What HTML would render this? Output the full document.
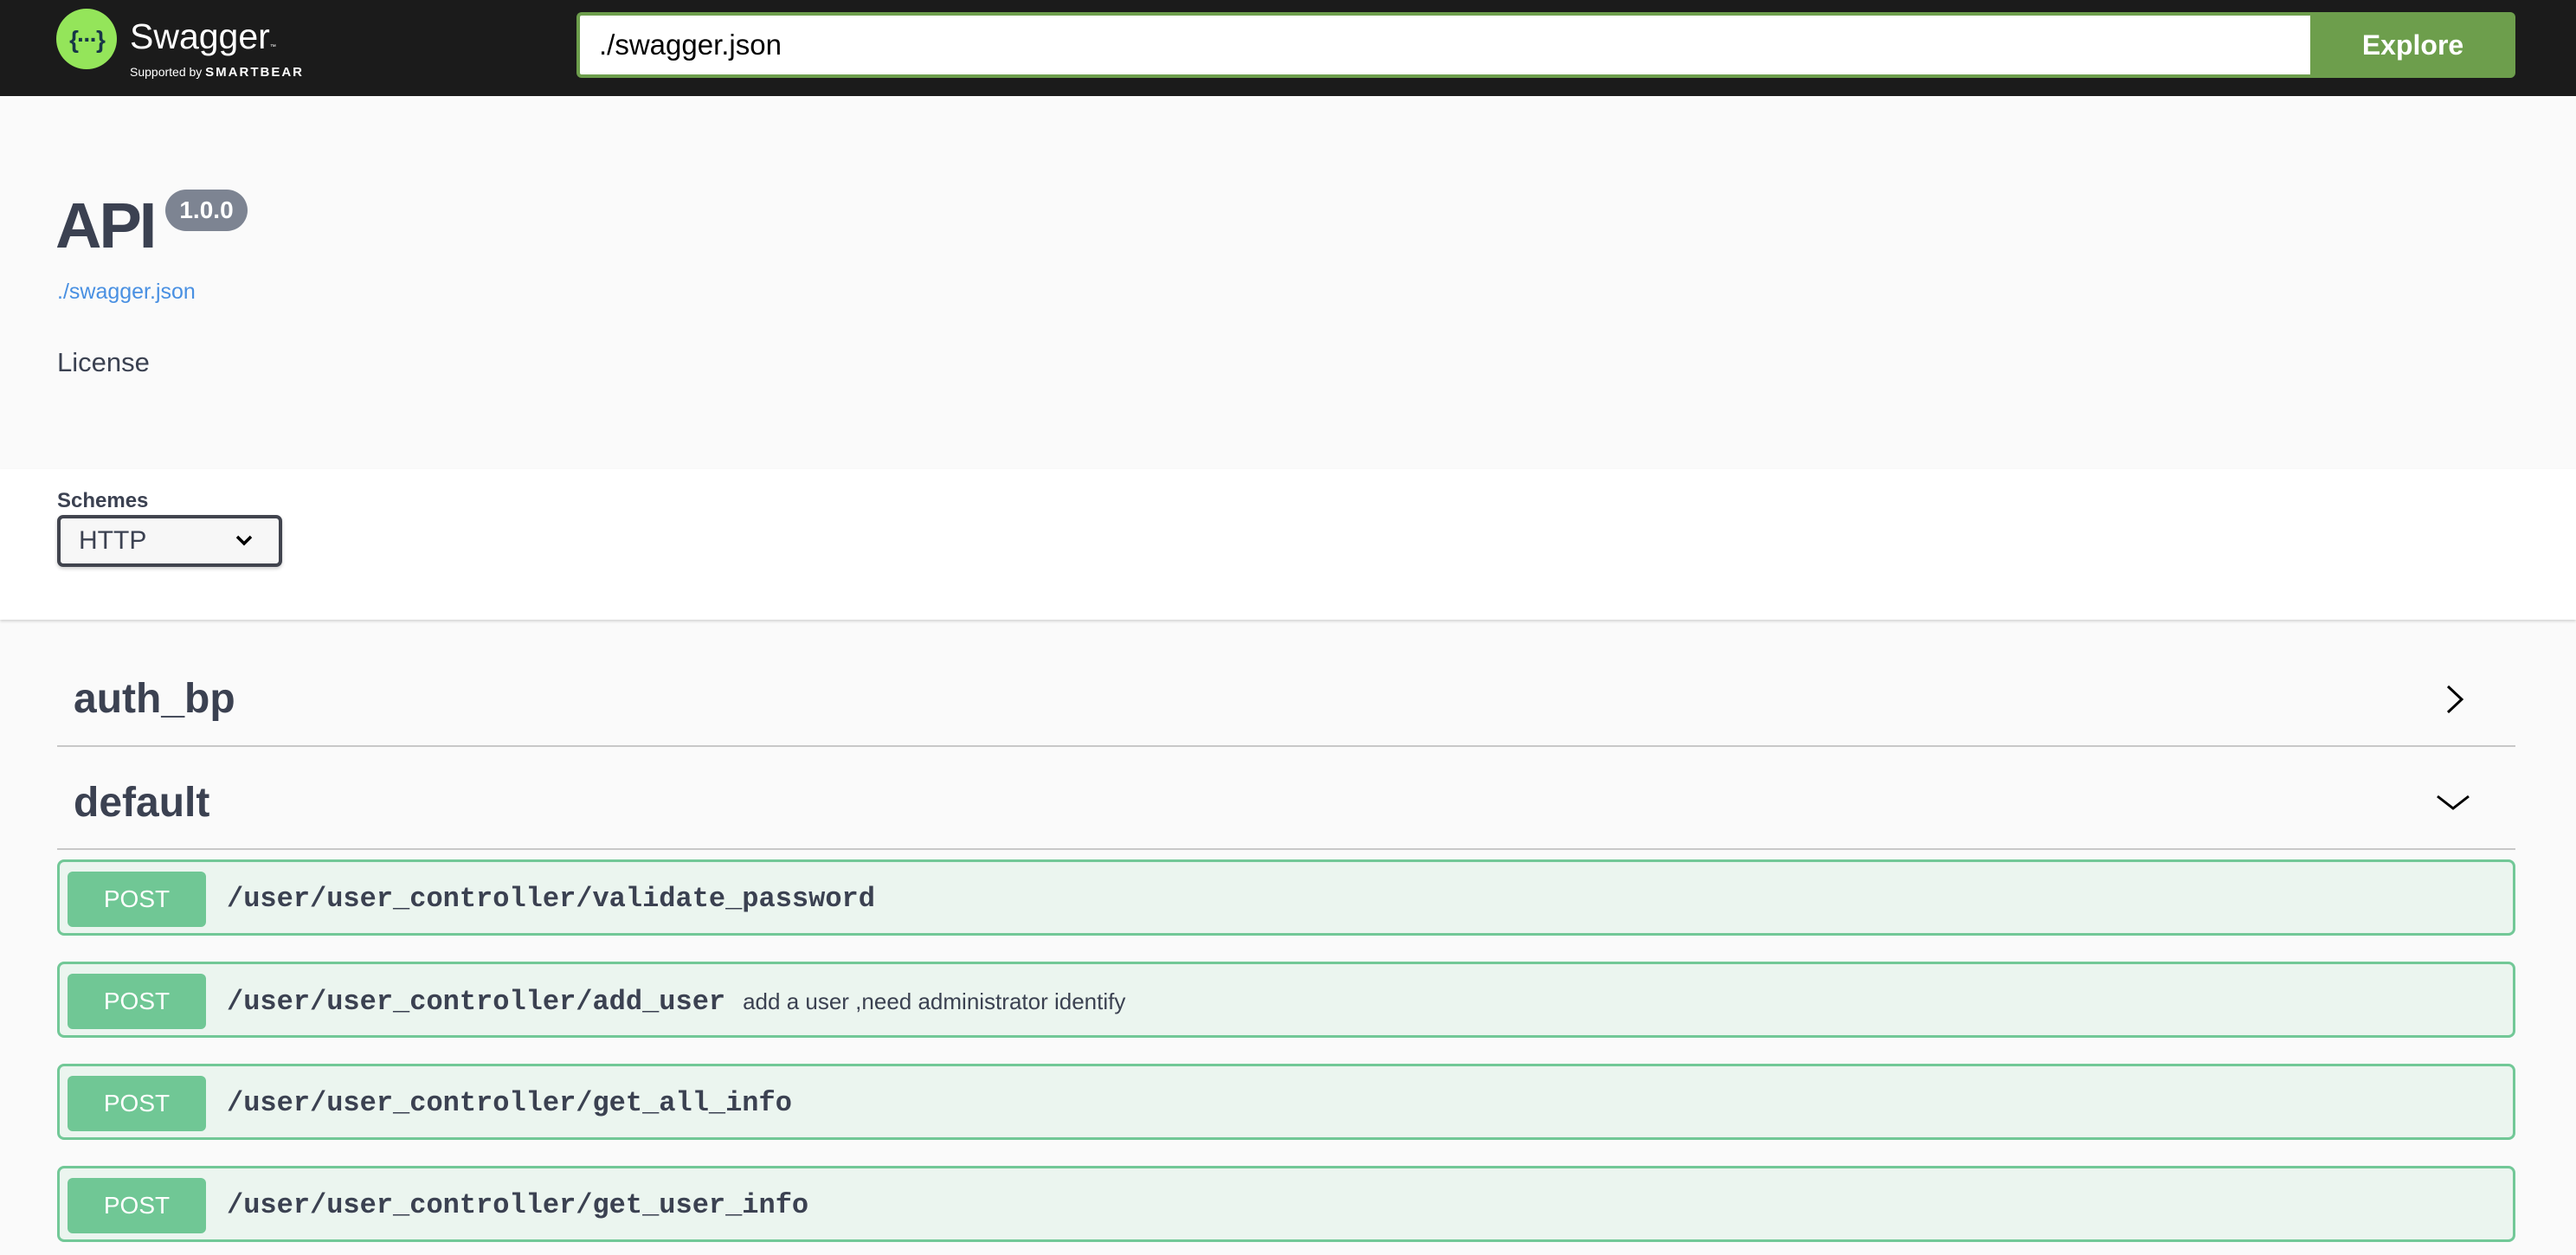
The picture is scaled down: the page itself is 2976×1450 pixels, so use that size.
<!DOCTYPE html>
<html><head><meta charset="utf-8"><style>
*{margin:0;padding:0;box-sizing:border-box}
body{width:2976px;height:1450px;overflow:hidden;background:#fafafa;font-family:"Liberation Sans",sans-serif;color:#3b4151;position:relative}
.a{position:absolute;white-space:nowrap}
.hdr{left:0;top:0;width:2976px;height:111px;background:#1b1b1b}
.op{left:66px;width:2840px;height:88px;border:3px solid #72c897;border-radius:8px;background:#ebf5ef}
.m{position:absolute;left:9px;top:11px;width:160px;height:64px;background:#70c795;border-radius:6px;color:#fff;font-size:28px;line-height:64px;text-align:center}
.p{position:absolute;left:193px;top:2px;line-height:82px;font-family:"Liberation Mono",monospace;font-weight:bold;font-size:32px;color:#3b4151}
.s{font-family:"Liberation Sans",sans-serif;font-weight:normal;font-size:26px;margin-left:20px}
</style></head><body>
<div class="a hdr"></div>
<svg class="a" style="left:64px;top:9px" width="72" height="72" viewBox="0 0 72 72">
<circle cx="36" cy="36" r="35" fill="#94e55a"/>
<text x="36" y="46" text-anchor="middle" font-family="Liberation Sans" font-weight="bold" font-size="28" fill="#173647" letter-spacing="-2">{···}</text>
</svg>
<div class="a" style="left:150px;top:17px;font-size:41px;color:#fff;line-height:50px">Swagger<span style="font-size:7px">™</span></div>
<div class="a" style="left:150px;top:74px;font-size:14px;color:#fff;line-height:18px">Supported by <span style="font-size:15px;letter-spacing:2px;font-weight:bold">SMARTBEAR</span></div>
<div class="a" style="left:666px;top:14px;width:2004px;height:76px;background:#fff;border:4px solid #6d9e4c;border-right:none;border-radius:6px 0 0 6px;font-size:33px;line-height:68px;padding-left:22px;color:#000">./swagger.json</div>
<div class="a" style="left:2669px;top:14px;width:237px;height:76px;background:#6d9e4c;border-radius:0 6px 6px 0;color:#fff;font-weight:bold;font-size:32px;line-height:76px;text-align:center">Explore</div>
<div class="a" style="left:64px;top:216px;font-size:74px;line-height:90px;font-weight:bold;letter-spacing:-3px">API</div>
<div class="a" style="left:191px;top:219px;width:95px;height:48px;border-radius:24px;background:#7d8492;color:#fff;font-size:28px;line-height:48px;text-align:center;font-weight:bold">1.0.0</div>
<div class="a" style="left:66px;top:322px;font-size:25px;color:#4990e2;line-height:30px">./swagger.json</div>
<div class="a" style="left:66px;top:400px;font-size:31px;line-height:38px">License</div>
<div class="a" style="left:0;top:542px;width:2976px;height:174px;background:#fff;box-shadow:0 2px 3px rgba(0,0,0,.15)"></div>
<div class="a" style="left:66px;top:565px;font-size:24px;font-weight:bold;line-height:28px">Schemes</div>
<div class="a" style="left:66px;top:595px;width:260px;height:60px;border:4px solid #41444e;border-radius:7px;background:#f7f7f7;box-shadow:0 2px 4px rgba(0,0,0,.2);font-size:30px;line-height:52px;padding-left:21px">HTTP</div>
<svg class="a" style="left:270px;top:614px" width="24" height="20" viewBox="0 0 24 20"><path d="M4 6l8 8 8-8" fill="none" stroke="#000" stroke-width="3.5"/></svg>
<div class="a" style="left:85px;top:778px;font-size:48px;line-height:60px;font-weight:bold">auth_bp</div>
<svg class="a" style="left:2820px;top:788px" width="30" height="40" viewBox="0 0 30 40"><path d="M8 5l16 15-16 15" fill="none" stroke="#000" stroke-width="3"/></svg>
<div class="a" style="left:66px;top:861px;width:2840px;height:2px;background:#c8c8c8"></div>
<div class="a" style="left:85px;top:898px;font-size:48px;line-height:60px;font-weight:bold">default</div>
<svg class="a" style="left:2812px;top:912px" width="44" height="30" viewBox="0 0 44 30"><path d="M4 8l18 14 18-14" fill="none" stroke="#000" stroke-width="3"/></svg>
<div class="a" style="left:66px;top:980px;width:2840px;height:2px;background:#c8c8c8"></div>
<div class="a op" style="top:993px"><div class="m">POST</div><div class="p">/user/user_controller/validate_password</div></div>
<div class="a op" style="top:1111px"><div class="m">POST</div><div class="p">/user/user_controller/add_user<span class="s">add a user ,need administrator identify</span></div></div>
<div class="a op" style="top:1229px"><div class="m">POST</div><div class="p">/user/user_controller/get_all_info</div></div>
<div class="a op" style="top:1347px"><div class="m">POST</div><div class="p">/user/user_controller/get_user_info</div></div>
</body></html>
